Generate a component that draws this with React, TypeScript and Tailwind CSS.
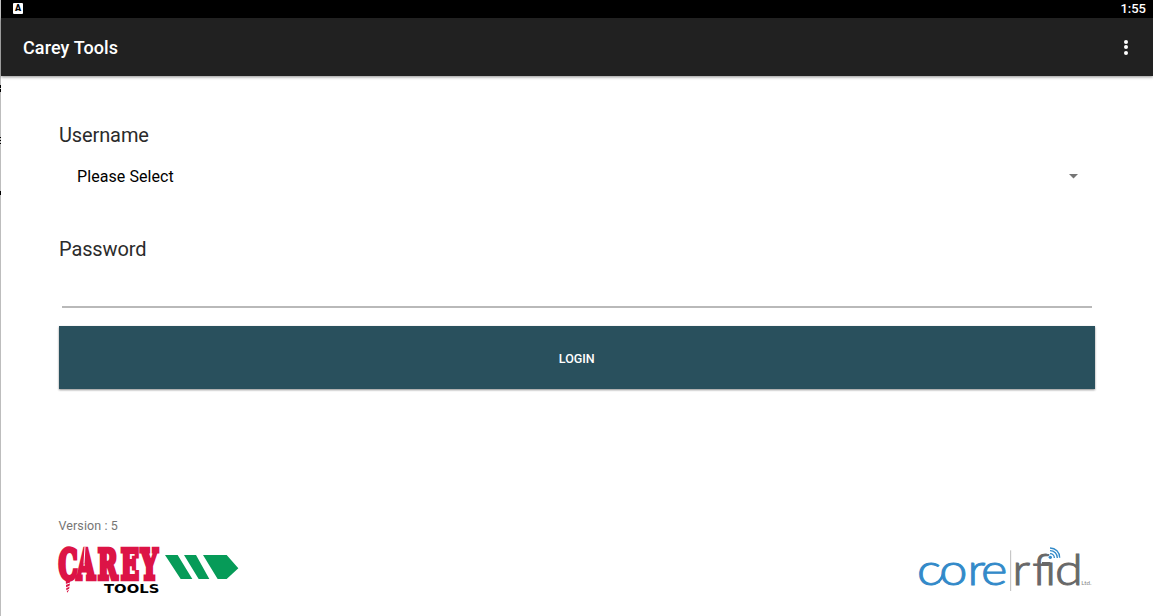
import React from "react";

type FieldLabelProps = {
  children: React.ReactNode;
};

const FieldLabel = ({ children }: FieldLabelProps) => {
  return (
    <div className="h-6 pl-[0.5px] text-[20px] leading-6 tracking-[-0.12px] text-[#2b2b2b]">
      {children}
    </div>
  );
};

const StatusBar = () => {
  return (
    <div className="flex h-[18px] items-center justify-between bg-black pl-3 pr-[7px] text-white">
      <span className="mt-[-2px] flex h-[11px] w-[10px] items-center justify-center rounded-[1px] bg-white text-[9px] font-black leading-none text-black">
        A
      </span>
      <span className="mt-[-1px] text-[13px] font-medium leading-4">1:55</span>
    </div>
  );
};

const AppBar = () => {
  return (
    <header className="flex h-[58px] items-center justify-between bg-[#212121] pl-[22px] pr-[25px] text-white shadow-[0_1px_3px_rgba(0,0,0,0.45)]">
      <h1 className="pt-0.5 text-[18px] font-medium leading-6 tracking-[0.1px]">
        Carey Tools
      </h1>
      <button aria-label="Menu" className="flex flex-col gap-[1.5px]">
        <span className="size-1 rounded-full bg-white" />
        <span className="size-1 rounded-full bg-white" />
        <span className="size-1 rounded-full bg-white" />
      </button>
    </header>
  );
};

const CareyLogo = () => {
  return (
    <svg
      width="182"
      height="50"
      viewBox="27 108 546 150"
      className="overflow-visible"
    >
      <g
        fill="#dc1446"
        stroke="#dc1446"
        strokeWidth="13"
        fontFamily="DejaVu Serif"
        fontWeight="bold"
        fontSize="124"
      >
        <text transform="translate(0 208) scale(0.58 1)" x="44 137 247 366 469">
          CAREY
        </text>
      </g>
      {/* stencil cut in the A */}
      <path d="M105 110l-3 50" stroke="#fff" strokeWidth="3" />
      {/* drill bit under the C */}
      <path d="M47 210h13v10l-3 20-5 8-3-9z" fill="#dc1446" />
      <path d="m46 224 14-5M47 234l13-6M48 243l11-6" stroke="#fff" strokeWidth="3" />
      <text
        x="162"
        y="250"
        textLength="166"
        lengthAdjust="spacingAndGlyphs"
        fontFamily="DejaVu Sans"
        fontWeight="bold"
        fontSize="36"
      >
        TOOLS
      </text>
      <path
        d="M345 135h38l44 72h-35zM402 135h36l40 72h-32zM459 135h71l35 40-35 32h-27z"
        fill="#069b58"
      />
    </svg>
  );
};

const CoreRfidLogo = () => {
  return (
    <svg
      width="176"
      height="48"
      viewBox="27 24 528 144"
      className="overflow-visible"
    >
      <g fontFamily="Lato" fontSize="132" fontWeight="300" strokeWidth="3">
        <text
          transform="translate(0 146) scale(1.15 1)"
          x="18 76 150 185"
          fill="#338ac9"
          stroke="#338ac9"
        >
          core
        </text>
        <text
          transform="translate(0 146) scale(1.15 1)"
          x="267 319 352 378"
          fill="#686868"
          stroke="#686868"
        >
          rfıd
        </text>
      </g>
      <path
        d="M85 138c8-7 12-15 15-23"
        fill="none"
        stroke="#338ac9"
        strokeWidth="8"
      />
      <path d="M302 43v122" stroke="#bdbdbd" strokeWidth="3" />
      <path d="M396 82h25" stroke="#686868" strokeWidth="8" />
      <circle cx="421" cy="64" r="5" fill="#338ac9" />
      <path
        d="M420 53c8 0 13 6 13 13M420 44c13 0 22 9 22 22M420 36c17 0 29 12 29 29"
        fill="none"
        stroke="#338ac9"
        strokeWidth="4"
      />
      <text x="514" y="147" fontFamily="Lato" fontSize="19" fill="#888">
        Ltd.
      </text>
    </svg>
  );
};

// one pixel wide strip along the window's left side
const WindowEdge = () => {
  return (
    <div className="flex w-px shrink-0 flex-col bg-[#bdbdbd]">
      <span className="mt-[85px] h-[3px] bg-black" />
      <span className="mt-px h-[3px] bg-black" />
      <span className="mt-[45px] h-px bg-black" />
      <span className="mt-0.5 h-px bg-black" />
      <span className="mt-0.5 h-px bg-black" />
      <span className="mt-[47px] h-1 bg-black" />
    </div>
  );
};

const App = () => {
  return (
    <div className="flex h-[616px] overflow-hidden bg-white font-[Roboto,sans-serif]">
      <WindowEdge />
      <div className="flex-1">
        <StatusBar />
        <AppBar />
        <main className="flex h-[540px] flex-col pl-[57.5px] pr-[58px] pt-[47px]">
          <FieldLabel>Username</FieldLabel>
          <button className="mt-[18px] flex h-6 items-center justify-between pl-[18.5px] pr-[17px] text-[16px] leading-6 tracking-[0.08px] text-black">
            <span>Please Select</span>
            <svg width="9" height="5" viewBox="0 0 9 5" className="mb-0.5">
              <path d="M0 0h9L4.5 4.5z" fill="#757575" />
            </svg>
          </button>
          <div className="mt-12">
            <FieldLabel>Password</FieldLabel>
          </div>
          <input
            type="password"
            aria-label="Password"
            className="mx-[3px] mt-4 h-[31px] border-b-2 border-[#b9b9b9] outline-none"
          />
          <button className="mt-[18px] h-[63px] shrink-0 bg-[#29505d] pt-[3px] text-[12.5px] font-medium text-white shadow-[0_1px_2px_rgba(0,0,0,0.45)]">
            LOGIN
          </button>
          <div className="mt-[129px] text-[12.5px] leading-4 tracking-[0.1px] text-[#757575]">
            Version : 5
          </div>
          <div className="mt-[10px] flex items-start justify-between">
            <div className="mt-[2px]">
              <CareyLogo />
            </div>
            <CoreRfidLogo />
          </div>
        </main>
      </div>
    </div>
  );
};

export default App;
